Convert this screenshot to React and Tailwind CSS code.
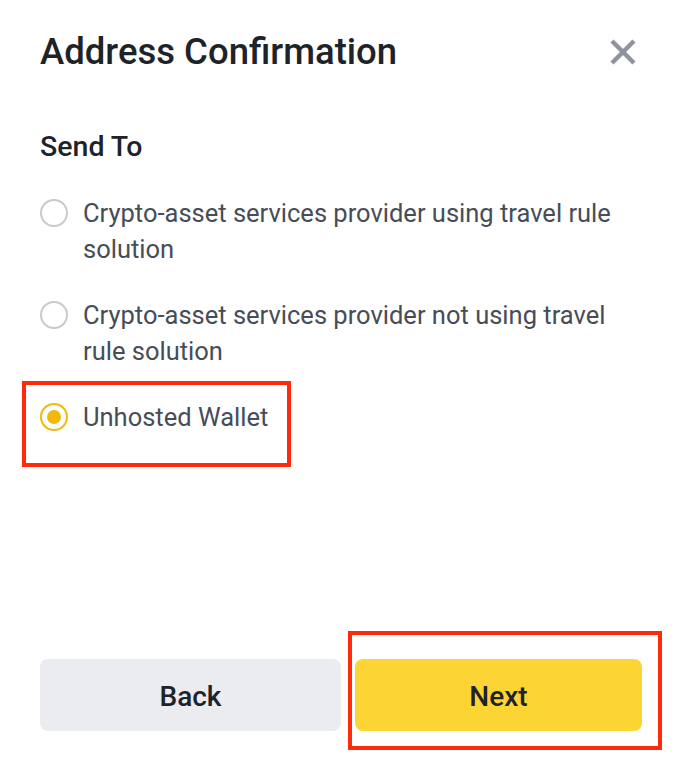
import React from "react";

function Radio({ checked }) {
  if (checked) {
    return (
      <span className="mt-[4px] flex h-[28px] w-[28px] shrink-0 items-center justify-center rounded-full border-2 border-[#f0b90b]">
        <span className="h-[14px] w-[14px] rounded-full bg-[#f0b90b]" />
      </span>
    );
  }
  return <span className="mt-[4px] h-[28px] w-[28px] shrink-0 rounded-full border-2 border-[#c6cad1]" />;
}

function Option({ checked, children }) {
  return (
    <div className="flex items-start gap-[15px]">
      <Radio checked={checked} />
      <span className="text-[25.5px] leading-[36px] text-[#474d57]">{children}</span>
    </div>
  );
}

export default function App() {
  return (
    <div
      className="relative flex h-[766px] w-[682px] flex-col bg-white px-[40px]"
      style={{ fontFamily: "Roboto, 'Liberation Sans', sans-serif" }}
    >
      <div className="flex items-center justify-between pt-[28px]">
        <h1 className="text-[36.5px] font-medium leading-[48px] text-[#1e2329]">Address Confirmation</h1>
        <svg width="28" height="28" viewBox="0 0 28 28" className="mr-[5px]">
          <path d="M3 3 L25 25 M25 3 L3 25" stroke="#8f949c" strokeWidth="4.5" strokeLinecap="butt" />
        </svg>
      </div>

      <div className="mt-[54px] text-[28.5px] font-medium leading-[34px] text-[#1e2329]">Send To</div>

      <div className="mt-[31px] flex flex-col gap-[30px]">
        <Option>Crypto-asset services provider using travel rule solution</Option>
        <Option>Crypto-asset services provider not using travel rule solution</Option>
        <Option checked>Unhosted Wallet</Option>
      </div>

      <div className="mt-auto mb-[35px] flex gap-[14px]">
        <button className="h-[72px] w-[302px] rounded-lg bg-[#eaecef] pt-[4px] text-[28px] font-medium text-[#1e2329]">Back</button>
        <button className="h-[72px] w-[288px] rounded-lg bg-[#fcd535] pt-[4px] text-[28px] font-medium text-[#1e2329]">Next</button>
      </div>

      <div className="pointer-events-none absolute left-[22px] top-[381px] h-[86px] w-[269px] border-[4px] border-[#ff2a0a]" />
      <div className="pointer-events-none absolute left-[348px] top-[631px] h-[119px] w-[314px] border-[4px] border-[#ff2a0a]" />
    </div>
  );
}
